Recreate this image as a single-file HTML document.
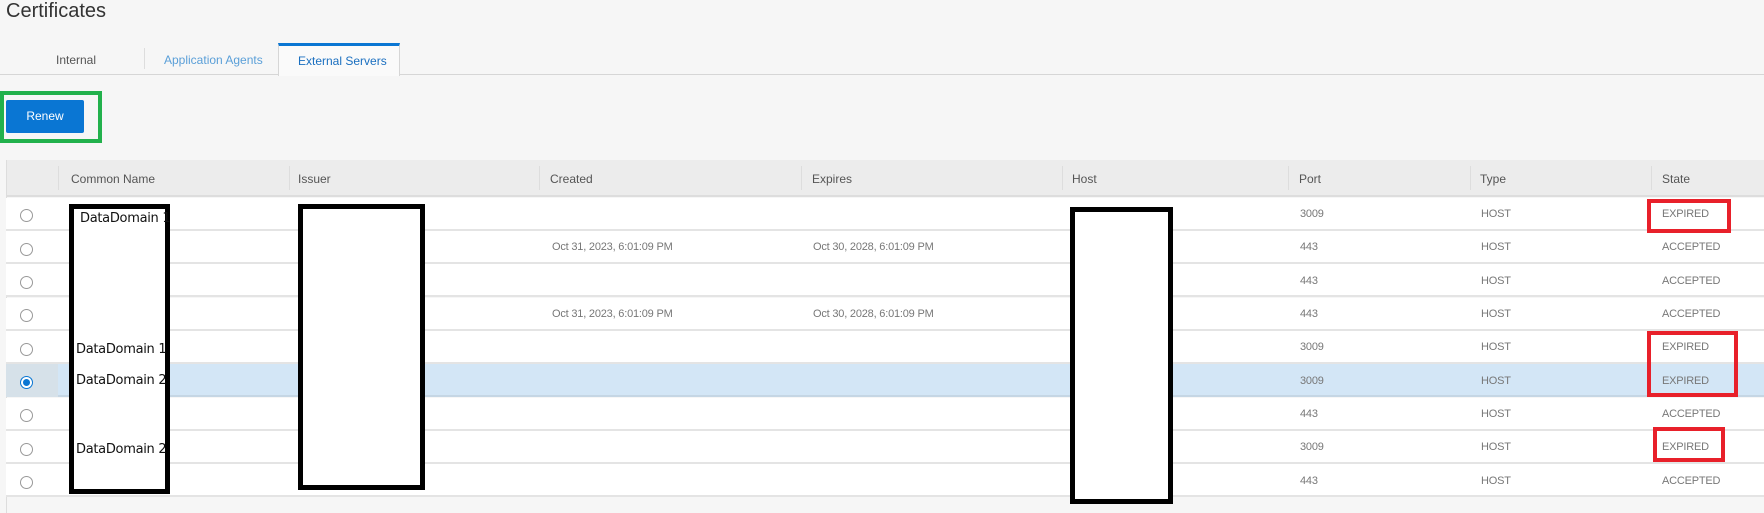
<!DOCTYPE html>
<html><head><meta charset="utf-8"><style>
*{margin:0;padding:0;box-sizing:border-box}
body{width:1764px;height:513px;background:#f6f6f6;position:relative;overflow:hidden;font-family:"Liberation Sans",sans-serif}
.a{position:absolute;white-space:nowrap}
.h{font-size:12px;color:#555;top:172px}
.c{font-size:11px;color:#777;letter-spacing:-0.2px}
.row{position:absolute;left:6px;width:1758px;height:33px;background:#fff;border-bottom:2px solid #e4e4e4}
.radio{position:absolute;left:20px;width:13px;height:13px;border:1px solid #999;border-radius:50%;background:#fff}
.blk{position:absolute;border:5px solid #000;background:#fff}
.red{position:absolute;border:4px solid #e8202a}
.dd{position:absolute;font-size:13px;color:#111;font-family:"DejaVu Sans","Liberation Sans",sans-serif;letter-spacing:-0.3px}
</style></head><body>
<div class="a" style="left:6px;top:0px;font-size:20px;color:#333">Certificates</div>
<div class="a" style="left:0;top:74px;width:1764px;height:1px;background:#d6d6d6"></div>
<div class="a" style="left:56px;top:53px;font-size:12px;color:#555">Internal</div>
<div class="a" style="left:144px;top:48px;width:1px;height:21px;background:#ddd"></div>
<div class="a" style="left:164px;top:53px;font-size:12px;color:#5a9fd8">Application Agents</div>
<div class="a" style="left:278px;top:43px;width:122px;height:33px;background:#fafafa;border:1px solid #d6d6d6;border-top:3px solid #0a76d3;border-bottom:none"></div>
<div class="a" style="left:298px;top:54px;font-size:12px;color:#1a6fc0">External Servers</div>
<div class="a" style="left:0;top:91px;width:102px;height:52px;border:4px solid #22b14c"></div>
<div class="a" style="left:6px;top:100px;width:78px;height:33px;background:#0a76d3;border-radius:2px;color:#fff;font-size:12px;text-align:center;line-height:33px">Renew</div>
<div class="a" style="left:6px;top:160px;width:1758px;height:37px;background:#ececec;border-bottom:2px solid #ddd;border-left:1px solid #ddd"></div>
<div class="a" style="left:58px;top:166px;width:1px;height:24px;background:#ddd"></div>
<div class="a" style="left:289px;top:166px;width:1px;height:24px;background:#ddd"></div>
<div class="a" style="left:539px;top:166px;width:1px;height:24px;background:#ddd"></div>
<div class="a" style="left:801px;top:166px;width:1px;height:24px;background:#ddd"></div>
<div class="a" style="left:1062px;top:166px;width:1px;height:24px;background:#ddd"></div>
<div class="a" style="left:1288px;top:166px;width:1px;height:24px;background:#ddd"></div>
<div class="a" style="left:1470px;top:166px;width:1px;height:24px;background:#ddd"></div>
<div class="a" style="left:1651px;top:166px;width:1px;height:24px;background:#ddd"></div>
<div class="a h" style="left:71px">Common Name</div>
<div class="a h" style="left:298px">Issuer</div>
<div class="a h" style="left:550px">Created</div>
<div class="a h" style="left:812px">Expires</div>
<div class="a h" style="left:1072px">Host</div>
<div class="a h" style="left:1299px">Port</div>
<div class="a h" style="left:1480px">Type</div>
<div class="a h" style="left:1662px">State</div>
<div class="a" style="left:6px;top:197px;width:1px;height:316px;background:#ddd"></div>

<div class="row" style="top:198px"></div>
<div class="row" style="top:231px"></div>
<div class="row" style="top:264px"></div>
<div class="row" style="top:298px"></div>
<div class="row" style="top:331px"></div>
<div class="row" style="top:364px;background:#d3e6f6;border-bottom-color:#c5d6e4"></div>
<div class="a" style="left:6px;top:364px;width:52px;height:33px;background:#d6e1e9"></div>
<div class="row" style="top:398px"></div>
<div class="row" style="top:431px"></div>
<div class="row" style="top:464px"></div>

<div class="radio" style="top:209px"></div>
<div class="radio" style="top:243px"></div>
<div class="radio" style="top:276px"></div>
<div class="radio" style="top:309px"></div>
<div class="radio" style="top:343px"></div>
<div class="radio" style="top:376px;border-color:#0a76d3"><div style="position:absolute;left:2px;top:2px;width:7px;height:7px;border-radius:50%;background:#0a76d3"></div></div>
<div class="radio" style="top:409px"></div>
<div class="radio" style="top:443px"></div>
<div class="radio" style="top:476px"></div>

<div class="a c" style="left:552px;top:241px">Oct 31, 2023, 6:01:09 PM</div>
<div class="a c" style="left:813px;top:241px">Oct 30, 2028, 6:01:09 PM</div>
<div class="a c" style="left:552px;top:308px">Oct 31, 2023, 6:01:09 PM</div>
<div class="a c" style="left:813px;top:308px">Oct 30, 2028, 6:01:09 PM</div>

<div class="a c" style="left:1300px;top:208px">3009</div><div class="a c" style="left:1481px;top:208px">HOST</div><div class="a c" style="left:1662px;top:208px">EXPIRED</div>
<div class="a c" style="left:1300px;top:241px">443</div><div class="a c" style="left:1481px;top:241px">HOST</div><div class="a c" style="left:1662px;top:241px">ACCEPTED</div>
<div class="a c" style="left:1300px;top:275px">443</div><div class="a c" style="left:1481px;top:275px">HOST</div><div class="a c" style="left:1662px;top:275px">ACCEPTED</div>
<div class="a c" style="left:1300px;top:308px">443</div><div class="a c" style="left:1481px;top:308px">HOST</div><div class="a c" style="left:1662px;top:308px">ACCEPTED</div>
<div class="a c" style="left:1300px;top:341px">3009</div><div class="a c" style="left:1481px;top:341px">HOST</div><div class="a c" style="left:1662px;top:341px">EXPIRED</div>
<div class="a c" style="left:1300px;top:375px">3009</div><div class="a c" style="left:1481px;top:375px">HOST</div><div class="a c" style="left:1662px;top:375px">EXPIRED</div>
<div class="a c" style="left:1300px;top:408px">443</div><div class="a c" style="left:1481px;top:408px">HOST</div><div class="a c" style="left:1662px;top:408px">ACCEPTED</div>
<div class="a c" style="left:1300px;top:441px">3009</div><div class="a c" style="left:1481px;top:441px">HOST</div><div class="a c" style="left:1662px;top:441px">EXPIRED</div>
<div class="a c" style="left:1300px;top:475px">443</div><div class="a c" style="left:1481px;top:475px">HOST</div><div class="a c" style="left:1662px;top:475px">ACCEPTED</div>

<div class="red" style="left:1647px;top:199px;width:84px;height:34px"></div>
<div class="red" style="left:1647px;top:331px;width:91px;height:66px"></div>
<div class="red" style="left:1653px;top:427px;width:72px;height:35px"></div>

<div class="blk" style="left:69px;top:204px;width:101px;height:290px"></div>
<div class="blk" style="left:298px;top:204px;width:127px;height:286px"></div>
<div class="blk" style="left:1070px;top:207px;width:103px;height:297px"></div>

<div class="dd" style="left:80px;top:211px">DataDomain 1</div>
<div class="dd" style="left:76px;top:342px">DataDomain 1</div>
<div class="dd" style="left:76px;top:373px">DataDomain 2</div>
<div class="dd" style="left:76px;top:442px">DataDomain 2</div>
</body></html>
